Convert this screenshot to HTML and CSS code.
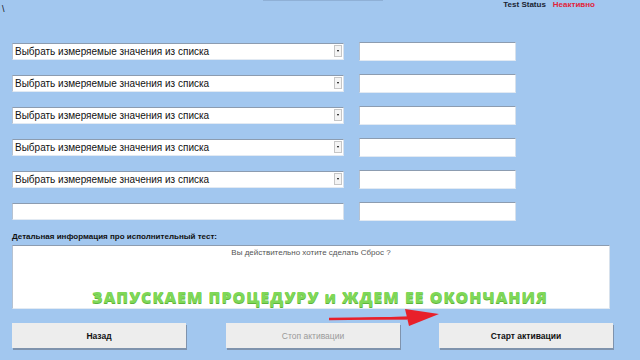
FILE: index.html
```html
<!DOCTYPE html>
<html lang="ru">
    <head>
        <meta charset="UTF-8" />
        <meta name="viewport" content="width=device-width, initial-scale=1.0" />
        <title>Тест активации</title>
        <link rel="stylesheet" href="styles.css">
    </head>
    <body>
        <div class="page">
            <div class="topbar">
                <span class="slash">\</span>
                <span class="tab-line"></span>
                <div class="status">
                    <span class="status-label">Test Status</span>
                    <span class="status-value">Неактивно</span>
                </div>
            </div>

            <div class="fields">
                <div class="select">Выбрать измеряемые значения из списка<span class="drop"></span></div>
                <div class="input"></div>
                <div class="select">Выбрать измеряемые значения из списка<span class="drop"></span></div>
                <div class="input"></div>
                <div class="select">Выбрать измеряемые значения из списка<span class="drop"></span></div>
                <div class="input"></div>
                <div class="select">Выбрать измеряемые значения из списка<span class="drop"></span></div>
                <div class="input"></div>
                <div class="select">Выбрать измеряемые значения из списка<span class="drop"></span></div>
                <div class="input"></div>
                <div class="select plain"></div>
                <div class="input"></div>
            </div>

            <div class="details-label">Детальная информация про исполнительный тест:</div>
            <div class="details">Вы действительно хотите сделать Сброс ?</div>

            <div class="buttons">
                <button class="btn">Назад</button>
                <button class="btn disabled">Стоп активации</button>
                <button class="btn">Старт активации</button>
            </div>

            <div class="overlay-text">ЗАПУСКАЕМ ПРОЦЕДУРУ и ЖДЕМ ЕЕ ОКОНЧАНИЯ</div>
            <svg class="arrow" width="112" height="20" viewBox="0 0 112 20">
                <path d="M0 11 L78 8.5 L78 11.5 Z" fill="#e8202a"/>
                <path d="M0 11 L80 10" stroke="#e8202a" stroke-width="2.5" fill="none"/>
                <path d="M76 1 L110 6 L80 18 Z" fill="#e8202a"/>
            </svg>
        </div>
    </body>
</html>
```

FILE: styles.css
```css
body {
    margin: 0;
    background-color: #a2c7ef;
    font-family: "Liberation Sans", Arial, sans-serif;
    color: #111;
}
.page {
    position: relative;
    width: 640px;
    height: 360px;
    overflow: hidden;
}
.topbar {
    position: relative;
    height: 42px;
}
.slash {
    position: absolute;
    left: 2px;
    top: 4px;
    font-size: 9px;
}
.tab-line {
    position: absolute;
    left: 263px;
    top: 0;
    width: 120px;
    height: 1px;
    background-color: #8fb0d6;
}
.status {
    position: absolute;
    right: 45px;
    top: 0;
    font-size: 8px;
    font-weight: bold;
    display: flex;
    gap: 7px;
}
.status-label {
    color: #1a1f33;
}
.status-value {
    color: #e0243b;
}
.fields {
    display: grid;
    grid-template-columns: 332px 157px;
    column-gap: 15px;
    row-gap: 12px;
    padding-left: 12px;
}
.select {
    position: relative;
    height: 15px;
    background-color: #fff;
    border-top: 1px solid #8c9cb0;
    border-left: 1px solid #b5c2d2;
    border-right: 1px solid #d7e1ec;
    border-bottom: 1px solid #e2eaf3;
    font-size: 10px;
    line-height: 15px;
    padding-left: 2px;
    margin-top: 1px;
    margin-bottom: 2px;
}
.drop {
    position: absolute;
    right: 1px;
    top: 1px;
    width: 8px;
    height: 12px;
    border: 1px solid #c6c6c6;
    background-color: #f4f4f4;
    box-sizing: border-box;
}
.drop::after {
    content: "";
    position: absolute;
    left: 2px;
    top: 4px;
    border-left: 1.5px solid transparent;
    border-right: 1.5px solid transparent;
    border-top: 2px solid #000;
}
.input {
    height: 17px;
    background-color: #fff;
    border-top: 1px solid #8c9cb0;
    border-left: 1px solid #b5c2d2;
    border-right: 1px solid #d7e1ec;
    border-bottom: 1px solid #e2eaf3;
}
.details-label {
    margin: 10px 0 0 12px;
    font-size: 8px;
    font-weight: bold;
    height: 12px;
}
.details {
    margin: 0 0 0 12px;
    width: 598px;
    height: 64px;
    background-color: #fff;
    border-top: 1px solid #8c9cb0;
    border-left: 1px solid #b5c2d2;
    border-right: 1px solid #d7e1ec;
    border-bottom: 1px solid #e2eaf3;
    text-align: center;
    font-size: 8px;
    color: #555;
    padding-top: 2px;
    box-sizing: border-box;
    margin-top: 1px;
}
.buttons {
    display: flex;
    gap: 40px;
    padding-left: 12px;
    margin-top: 14px;
}
.btn {
    width: 174px;
    height: 25px;
    border: none;
    background-color: #ededed;
    box-shadow: 1px 2px 0 #7f93ad;
    font-family: "Liberation Sans", Arial, sans-serif;
    font-size: 8.5px;
    font-weight: bold;
    color: #111;
    padding: 0;
}
.btn.disabled {
    font-weight: normal;
    color: #9a9a9a;
}
.btn:last-child {
    margin-left: -1px;
}
.overlay-text {
    position: absolute;
    left: 0;
    width: 640px;
    top: 286px;
    text-align: center;
    font-family: "Open Sans", sans-serif;
    font-weight: 800;
    font-size: 16px;
    letter-spacing: 1px;
    color: #7fd858;
    text-shadow: 0 1px 0 #5db33a;
}
.arrow {
    position: absolute;
    left: 329px;
    top: 308px;
}
```
